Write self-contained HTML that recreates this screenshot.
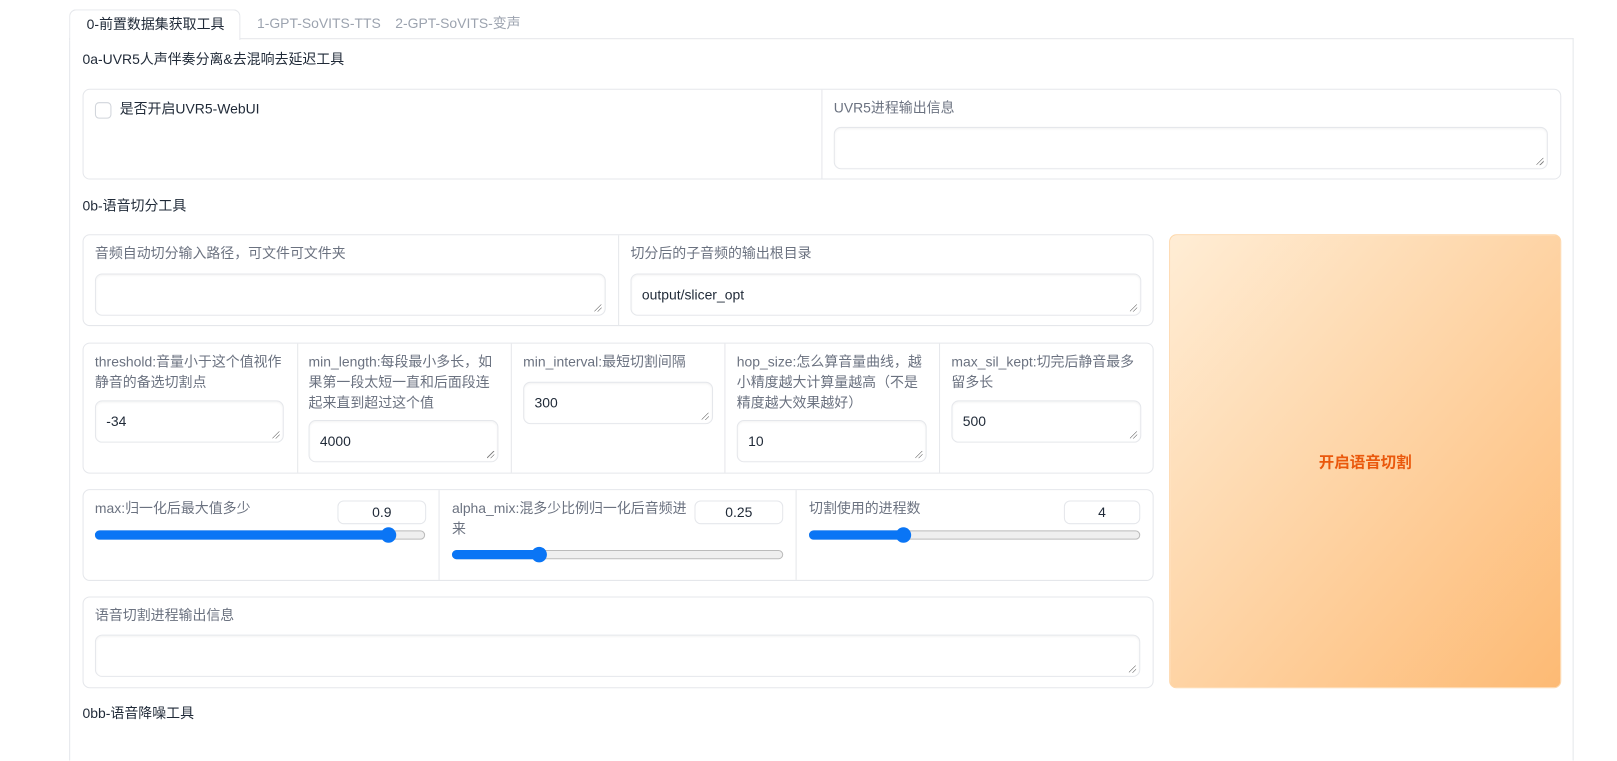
<!DOCTYPE html>
<html><head><meta charset="utf-8"><style>
*{box-sizing:border-box;margin:0;padding:0}
body{width:1617px;height:736px;background:#fff;font-family:"Liberation Sans","Noto Sans CJK SC",sans-serif;font-size:13.5px;color:#374151;position:relative;overflow:hidden}
#w{position:absolute;left:0;top:0;width:1567px;height:714px;transform:scale(1.0319);transform-origin:0 0}
.a{position:absolute}
.box{position:absolute;border:1px solid #e5e7eb;border-radius:7px;background:#fff}
.vd{position:absolute;top:0;bottom:0;border-left:1px solid #e5e7eb}
.lbl{position:absolute;color:#6b7280;font-size:13.5px;line-height:20px}
.ta{position:absolute;height:41px;border:1px solid #e5e7eb;border-radius:7px;background:#fff;box-shadow:inset 0 1px 2px rgba(0,0,0,.05);padding:0 10px;line-height:39px;font-size:13.5px;color:#1f2937}
.ta::after{content:"";position:absolute;right:3px;bottom:3px;width:7px;height:7px;background:linear-gradient(135deg,transparent 45%,#888 45%,#888 52%,transparent 52%,transparent 70%,#888 70%,#888 77%,transparent 77%)}
.num{position:absolute;height:23px;border:1px solid #e5e7eb;border-radius:6px;text-align:center;line-height:21px;font-size:13.5px;color:#1f2937}
.tr{position:absolute;height:9px;border:1px solid #bbb;border-radius:5px;background:#efefef}
.fill{position:absolute;left:-1px;top:-1px;height:9px;border-radius:5px;background:#0a75f5}
.th{position:absolute;top:-4px;width:15px;height:15px;border-radius:50%;background:#0a75f5}
</style></head><body><div id="w">
<div class="a" style="left:67px;top:37px;width:1458px;height:700px;border:1px solid #e5e7eb;border-bottom:none"></div>
<div class="a" style="left:67px;top:9px;width:166px;height:30px;border:1px solid #e5e7eb;border-bottom:none;border-radius:7px 7px 0 0;background:#fff;padding-left:16px;line-height:27px;color:#1f2937">0-前置数据集获取工具</div>
<div class="a" style="left:249px;top:9px;line-height:27px;color:#9ca3af">1-GPT-SoVITS-TTS</div>
<div class="a" style="left:383px;top:9px;line-height:27px;color:#9ca3af">2-GPT-SoVITS-变声</div>

<div class="a" style="left:80px;top:48px;line-height:20px;color:#1f2937">0a-UVR5人声伴奏分离&amp;去混响去延迟工具</div>
<div class="box" style="left:80px;top:86px;width:1433px;height:88px"><div class="vd" style="left:715px"></div></div>
<div class="a" style="left:92px;top:99px;width:16px;height:16px;border:1px solid #d1d5db;border-radius:4px;background:#fff"></div>
<div class="a" style="left:116px;top:96px;line-height:20px;color:#1f2937">是否开启UVR5-WebUI</div>
<div class="lbl" style="left:808px;top:95px">UVR5进程输出信息</div>
<div class="ta" style="left:808px;top:123px;width:692px"></div>

<div class="a" style="left:80px;top:190px;line-height:20px;color:#1f2937">0b-语音切分工具</div>

<div class="box" style="left:80px;top:227px;width:1038px;height:89px"><div class="vd" style="left:518px"></div></div>
<div class="lbl" style="left:92px;top:236px">音频自动切分输入路径，可文件可文件夹</div>
<div class="ta" style="left:92px;top:265px;width:495px"></div>
<div class="lbl" style="left:611px;top:236px">切分后的子音频的输出根目录</div>
<div class="ta" style="left:611px;top:265px;width:495px">output/slicer_opt</div>

<div class="box" style="left:80px;top:332px;width:1038px;height:127px"><div class="vd" style="left:207px"></div><div class="vd" style="left:414px"></div><div class="vd" style="left:621px"></div><div class="vd" style="left:829px"></div></div>
<div class="lbl" style="left:92px;top:341px;width:186px">threshold:音量小于这个值视作静音的备选切割点</div>
<div class="ta" style="left:92px;top:388px;width:183px">-34</div>
<div class="lbl" style="left:299px;top:341px;width:186px">min_length:每段最小多长，如果第一段太短一直和后面段连起来直到超过这个值</div>
<div class="ta" style="left:299px;top:407px;width:184px">4000</div>
<div class="lbl" style="left:507px;top:341px;width:186px">min_interval:最短切割间隔</div>
<div class="ta" style="left:507px;top:370px;width:184px">300</div>
<div class="lbl" style="left:714px;top:341px;width:186px">hop_size:怎么算音量曲线，越小精度越大计算量越高（不是精度越大效果越好）</div>
<div class="ta" style="left:714px;top:407px;width:184px">10</div>
<div class="lbl" style="left:922px;top:341px;width:180px">max_sil_kept:切完后静音最多留多长</div>
<div class="ta" style="left:922px;top:388px;width:184px">500</div>

<div class="box" style="left:80px;top:474px;width:1038px;height:89px"><div class="vd" style="left:344px"></div><div class="vd" style="left:690px"></div></div>
<div class="lbl" style="left:92px;top:483px">max:归一化后最大值多少</div>
<div class="num" style="left:327px;top:485px;width:86px">0.9</div>
<div class="tr" style="left:92px;top:514px;width:320px"><div class="fill" style="width:286px"></div><div class="th" style="left:276px"></div></div>
<div class="lbl" style="left:438px;top:483px;width:235px">alpha_mix:混多少比例归一化后音频进来</div>
<div class="num" style="left:673px;top:485px;width:86px">0.25</div>
<div class="tr" style="left:438px;top:533px;width:321px"><div class="fill" style="width:86px"></div><div class="th" style="left:76px"></div></div>
<div class="lbl" style="left:784px;top:483px">切割使用的进程数</div>
<div class="num" style="left:1031px;top:485px;width:74px">4</div>
<div class="tr" style="left:784px;top:514px;width:321px"><div class="fill" style="width:92px"></div><div class="th" style="left:83px"></div></div>

<div class="box" style="left:80px;top:578px;width:1038px;height:89px"></div>
<div class="lbl" style="left:92px;top:587px">语音切割进程输出信息</div>
<div class="ta" style="left:92px;top:615px;width:1013px"></div>

<div class="a" style="left:1133px;top:227px;width:380px;height:440px;border:1px solid #fed7aa;border-radius:7px;background:linear-gradient(to bottom right,#ffedd5,#fdba74);display:flex;align-items:center;justify-content:center;color:#ea580c;font-weight:bold;font-size:15px">开启语音切割</div>

<div class="a" style="left:80px;top:682px;line-height:20px;color:#1f2937">0bb-语音降噪工具</div>
</div></body></html>
